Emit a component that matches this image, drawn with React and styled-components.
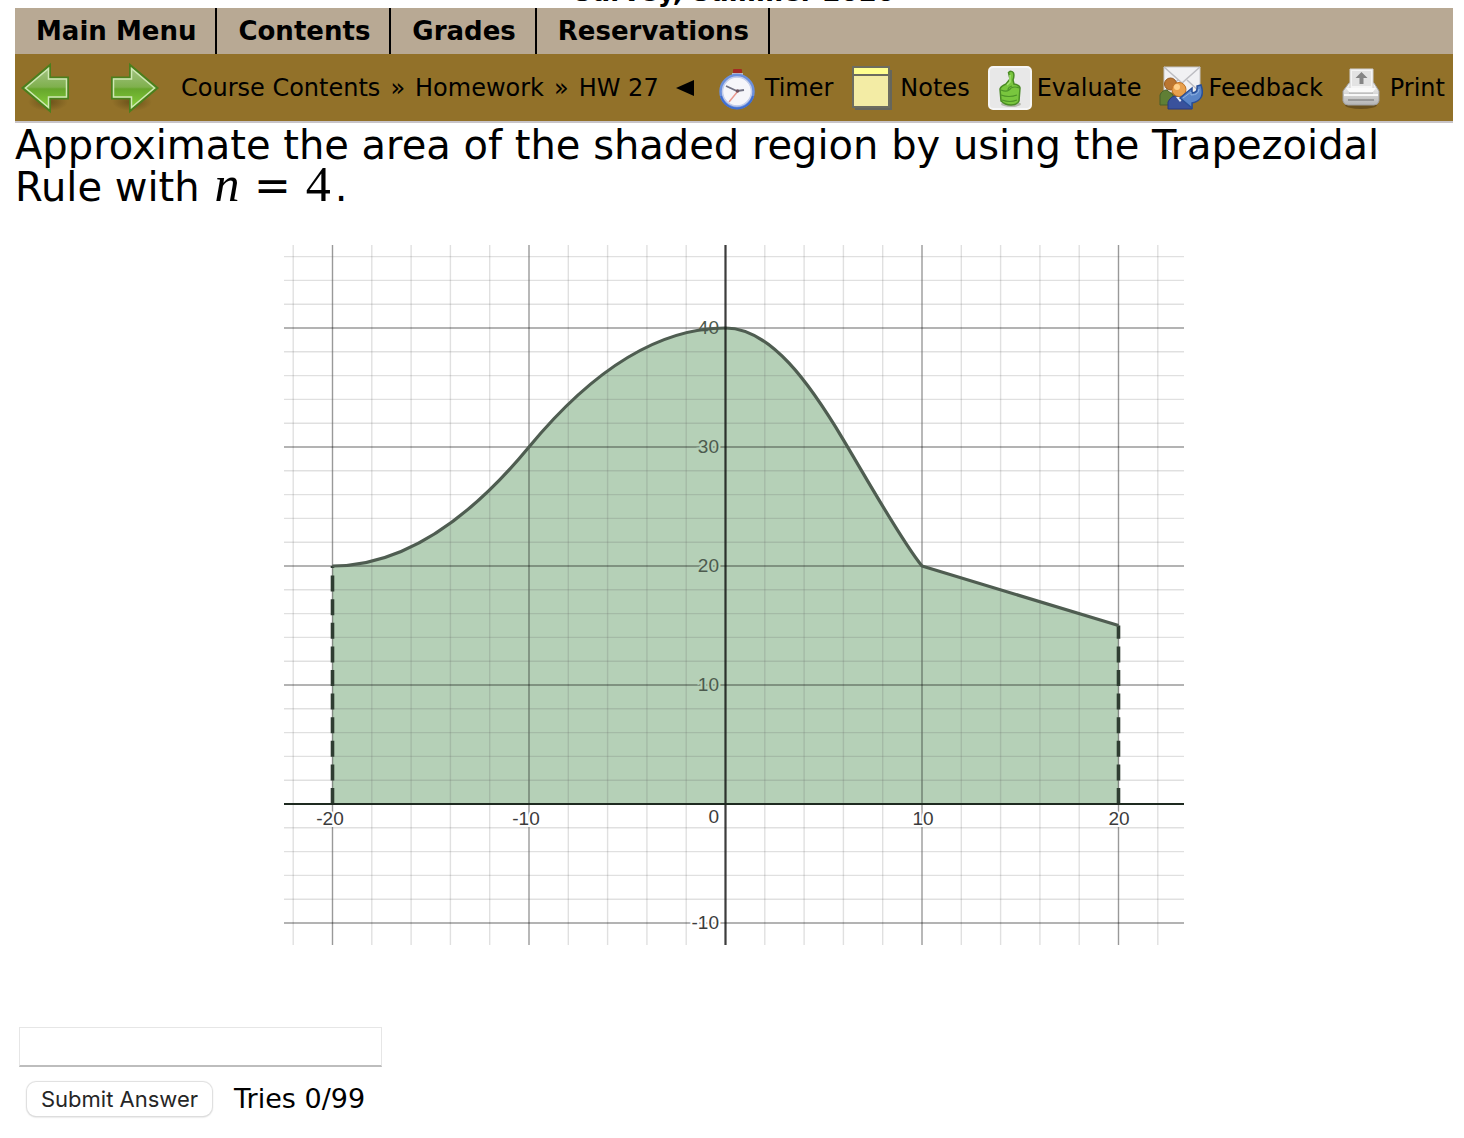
import styled, { createGlobalStyle } from 'styled-components';

const GlobalStyle = createGlobalStyle`
    body {
        margin: 0;
        background-color: #ffffff;
        color: #000000;
        font-family: Verdana, "DejaVu Sans", sans-serif;
    }
`;

const Page = styled.div`
    padding: 0px 11px 24px 15px;
`;

const CourseTitle = styled.div`
    box-sizing: border-box;
    height: 8px;
    padding-bottom: 2px;
    overflow: hidden;
    display: flex;
    justify-content: center;
    align-items: flex-end;
    font-size: 26px;
    font-weight: 700;
    line-height: 28px;
`;

const MainMenu = styled.nav`
    display: flex;
    background-color: #b8a994;
`;

const MenuLink = styled.a`
    padding: 0px 19px 0px 21px;
    border-right: 2px solid #000000;
    color: #000000;
    font-size: 26px;
    font-weight: 700;
    line-height: 46px;
    text-decoration: none;
`;

const Toolbar = styled.div`
    display: flex;
    align-items: center;
    justify-content: space-between;
    height: 67px;
    padding: 0px 8px 0px 5px;
    background-color: #927129;
    border-bottom: 2px solid #c8c4c8;
    font-size: 24px;
    white-space: nowrap;
`;

const Group = styled.div`
    display: flex;
    align-items: center;
    gap: ${(props) => props.$gap}px;
`;

const IconLink = styled.a`
    display: flex;
`;

const Crumbs = styled.div`
    display: flex;
    align-items: center;
    gap: 10px;
`;

const Crumb = styled.a`
    color: #000000;
    text-decoration: none;
`;

const Collapse = styled.button`
    display: flex;
    margin-left: 7px;
    padding: 0px;
    border: none;
    background: none;
    cursor: pointer;
`;

const Tool = styled.a`
    display: flex;
    align-items: center;
    gap: 5px;
    color: #000000;
    text-decoration: none;
`;

const Question = styled.p`
    margin: 1px 0px 0px 0px;
    font-size: 40px;
    line-height: 42px;
`;

const Variable = styled.i`
    margin-left: 2px;
    font-family: "Liberation Serif", serif;
    font-size: 50px;
    line-height: 1px;
`;

const Equals = styled.span`
    margin: 0px 2px;
    font-size: 44px;
    line-height: 1px;
`;

const Num = styled.span`
    margin-right: 4px;
    font-family: "Liberation Serif", serif;
    font-size: 50px;
    line-height: 1px;
`;

const Figure = styled.figure`
    display: flex;
    justify-content: center;
    margin: 37px 0px 82px 0px;
    svg {
        flex: 0 1 900px;
        min-width: 0;
    }
`;

const AnswerForm = styled.form`
    display: flex;
    flex-direction: column;
    align-items: flex-start;
    gap: 13px;
    padding-left: 4px;
`;

const AnswerInput = styled.input`
    box-sizing: border-box;
    width: 363px;
    max-width: 100%;
    height: 40px;
    padding: 0px 8px;
    border: 1px solid #e6e6e6;
    border-bottom: 2px solid #bdbdbd;
    font-size: 24px;
`;

const SubmitRow = styled.div`
    display: flex;
    align-items: center;
    gap: 22px;
    padding-left: 8px;
`;

const SubmitButton = styled.button`
    height: 34px;
    padding: 0px 14px;
    border: none;
    border-radius: 9px;
    background-color: #ffffff;
    box-shadow: 0px 0px 1px 1px #dedede, 0px 1px 2px #c4c4c4;
    color: #262626;
    font-family: Inter, sans-serif;
    font-size: 22px;
    line-height: 34px;
`;

const Tries = styled.span`
    font-size: 27px;
    line-height: 38px;
`;

const ArrowIcon = ({ flip }) => (
    <svg width="49" height="52" viewBox="0 0 49 52" aria-hidden="true">
        <defs>
            <linearGradient id="arrowFill" x1="0" y1="0" x2="0" y2="1">
                <stop offset="0" stopColor="#a9c68c" />
                <stop offset="0.48" stopColor="#7fb04d" />
                <stop offset="0.52" stopColor="#67a62c" />
                <stop offset="1" stopColor="#8ad63c" />
            </linearGradient>
            <radialGradient id="arrowShade">
                <stop offset="0" stopColor="#503c10" stopOpacity="0.6" />
                <stop offset="1" stopColor="#503c10" stopOpacity="0" />
            </radialGradient>
        </defs>
        <g transform={flip ? 'translate(49 0) scale(-1 1)' : undefined}>
            <ellipse cx="28" cy="40" rx="20" ry="9" fill="url(#arrowShade)" />
            <path d="M2.500 26 30 3v12.500h18v21H30v12.500z" fill="url(#arrowFill)" stroke="#4b7f1d" strokeWidth="2" />
            <path d="M5.500 26 28.500 6.500v10.500h18v18H28.500v10.500z" fill="none" stroke="#cfe8b4" strokeWidth="1.500" />
        </g>
    </svg>
);

const TimerIcon = () => (
    <svg width="44" height="44" viewBox="0 0 44 44" aria-hidden="true">
        <rect x="17" y="3" width="9" height="6" rx="1" fill="#a52a22" />
        <rect x="16" y="7" width="11" height="3" fill="#b9b9c4" />
        <circle cx="21" cy="25.500" r="16" fill="#f6f6fa" stroke="#6c90dc" strokeWidth="3.500" />
        <circle cx="21" cy="25.500" r="14.500" fill="none" stroke="#c3cdea" strokeWidth="1.500" />
        <path d="M5 30a16.500 16.500 0 0 0 32 0" fill="none" stroke="#416fd0" strokeWidth="2" />
        <path d="m10 20 11 5 7-1" fill="none" stroke="#737384" strokeWidth="1.800" />
        <path d="m22 25-9 11" stroke="#e9988e" strokeWidth="1.500" />
        <circle cx="21.500" cy="25" r="1.800" fill="#725560" />
    </svg>
);

const NotesIcon = () => (
    <svg width="44" height="44" viewBox="0 0 44 44" aria-hidden="true">
        <path d="M4 4h37v40H4z" fill="#66665c" />
        <path d="M2 1h36v40H2z" fill="#f3eca5" stroke="#6d6d60" strokeWidth="2" />
        <path d="M3 2h34v6H3z" fill="#ffff90" />
        <path d="M2 9h36" stroke="#6d6d60" strokeWidth="2" />
    </svg>
);

const EvaluateIcon = () => (
    <svg width="44" height="44" viewBox="0 0 44 44" aria-hidden="true">
        <rect x="1" y="1" width="42" height="42" rx="4" fill="#e8e8e8" stroke="#f6f6f6" strokeWidth="2" />
        <ellipse cx="23" cy="38" rx="10" ry="3" fill="#b4b8ae" />
        <path
            d="M20.500 6.500q3-2.500 5 .500 1 3-.500 7l1 4q6 1 6 4l-1 13q-2 4-8 4-6 0-10-4l-1-12q1-3 6-5l4-5z"
            fill="#79c63e"
            stroke="#4a8a25"
            strokeWidth="1.500"
        />
        <path d="M13 24q7 3 10-2 4-2 8 0M13 29q8 3 16 0M14 34q8 3 15 0M24 20q-4 1-4 4" fill="none" stroke="#4d9428" strokeWidth="1.200" />
        <path d="M22 9v7l-3 3" fill="none" stroke="#a5e374" strokeWidth="1.500" />
    </svg>
);

const FeedbackIcon = () => (
    <svg width="44" height="44" viewBox="0 0 44 44" aria-hidden="true">
        <path d="M5 1h36v25H5z" fill="#f1f1f3" stroke="#c5c5c8" />
        <path d="m5 1 18 16L41 1M5 26l14-12M41 26 28 14" fill="none" stroke="#bdbdc2" strokeWidth="1.500" />
        <path d="M1 39V29q2-5 7-5l6 5v10z" fill="#607f35" stroke="#46612a" />
        <circle cx="11.500" cy="18" r="6" fill="#ba7631" stroke="#96591e" />
        <path d="M9 43v-7q3-7 12-7 10 0 12 8v6z" fill="#3a529c" stroke="#29397e" />
        <path d="m17 31 4 5 4-5z" fill="#e9edf7" />
        <circle cx="20" cy="23.500" r="7" fill="#e8a04d" stroke="#bf7223" />
        <circle cx="18" cy="21" r="3" fill="#ffd08b" />
        <path d="m21 32 12-10v5q6 0 5-7l4-1q5 15-9 18v5z" fill="#5985c8" stroke="#284f98" strokeWidth="1.500" />
        <path d="m24 32 8-6v3q8 0 8-6" fill="none" stroke="#90b3e3" />
    </svg>
);

const PrintIcon = () => (
    <svg width="44" height="44" viewBox="0 0 44 44" aria-hidden="true">
        <defs>
            <linearGradient id="printBody" x1="0" y1="0" x2="0" y2="1">
                <stop offset="0" stopColor="#f7f7f7" />
                <stop offset="1" stopColor="#b4b4b4" />
            </linearGradient>
        </defs>
        <ellipse cx="20" cy="39" rx="16" ry="4" fill="#503c18" opacity="0.6" />
        <path d="m8 17-6 8v10q1 4 5 4h26q4 0 5-4V25l-5-8z" fill="url(#printBody)" stroke="#a0a0a0" />
        <path d="M9 3h23v21H9z" fill="#f5f5f5" stroke="#d0d0d0" />
        <path d="M11 5h19v15H11z" fill="#e3e3e3" />
        <path d="m20.500 6 6 6h-4v6h-4v-6h-4z" fill="#858585" />
        <path d="M5 22h30l-4 5H9z" fill="#fafafa" />
        <path d="M3 29h34" stroke="#f7f7f7" strokeWidth="2" />
        <path d="M7 34h26" stroke="#8a8a8a" strokeWidth="1.500" />
        <path d="M8 27h24" stroke="#a7a7a7" />
    </svg>
);

const TOOLS = [
    { label: 'Timer', Icon: TimerIcon },
    { label: 'Notes', Icon: NotesIcon },
    { label: 'Evaluate', Icon: EvaluateIcon },
    { label: 'Feedback', Icon: FeedbackIcon },
    { label: 'Print', Icon: PrintIcon },
];

const MENU = ['Main Menu', 'Contents', 'Grades', 'Reservations'];

// graph units -> svg units
const gx = (x) => 441.5 + x * 19.65;
const gy = (y) => 559 - y * 11.9;
const pt = (x, y) => `${gx(x)} ${gy(y)}`;

const CURVE = [
    `M${pt(-20, 20)}`,
    `Q${pt(-15, 20)} ${pt(-10, 30)}`,
    `Q${pt(-5, 40)} ${pt(0, 40)}`,
    `C${pt(2.3, 40)} ${pt(4.3, 35.3)} ${pt(6, 30.6)}`,
    `C${pt(7.3, 27)} ${pt(9, 22)} ${pt(10, 20)}`,
    `L${pt(20, 15)}`,
].join(' ');

const evens = (from, to) => Array.from({ length: (to - from) / 2 + 1 }, (_, i) => from + i * 2);
const gridStroke = (v) => (v % 10 === 0 ? '#000000' : '#666666');
const gridOpacity = (v) => (v % 10 === 0 ? 0.4 : 0.2);

const GraphText = styled.text`
    font-family: "Liberation Sans", Arial, sans-serif;
    font-size: 19px;
    fill: ${(props) => (props.$soft ? '#4c5a4e' : '#3c3c3c')};
    stroke: ${(props) => props.$halo || 'none'};
    stroke-width: 4px;
    paint-order: stroke;
`;

function Graph() {
    return (
        <svg viewBox="0 0 900 700" role="img" aria-label="Shaded region under a curve from -20 to 20">
            <path d={`${CURVE} L${pt(20, 0)} L${pt(-20, 0)} Z`} fill="#b5d0b7" />
            {evens(-22, 22).map((x) => (
                <path key={`x${x}`} d={`M${gx(x)} 0V700`} stroke={gridStroke(x)} strokeOpacity={gridOpacity(x)} strokeWidth="1.4" />
            ))}
            {evens(-10, 46).map((y) => (
                <path key={`y${y}`} d={`M0 ${gy(y)}H900`} stroke={gridStroke(y)} strokeOpacity={gridOpacity(y)} strokeWidth="1.4" />
            ))}
            <path
                d={`M${pt(-20, 0)}L${pt(-20, 20)}M${pt(20, 0)}L${pt(20, 15)}`}
                stroke="#2f3d32"
                strokeWidth="3.6"
                strokeDasharray="16 7.6"
            />
            <path d={CURVE} fill="none" stroke="#4f5d51" strokeWidth="3.2" strokeLinejoin="round" />
            {[10, 20, 30].map((y) => (
                <GraphText key={y} $soft $halo="#b5d0b7" x="435" y={gy(y) + 6} textAnchor="end">{y}</GraphText>
            ))}
            <GraphText $soft x="435" y={gy(40) + 6} textAnchor="end">40</GraphText>
            <GraphText $halo="#ffffff" x="435" y={gy(-10) + 6} textAnchor="end">-10</GraphText>
            <GraphText $halo="#ffffff" x="435" y="578" textAnchor="end">0</GraphText>
            <GraphText $halo="#ffffff" x="46" y="580" textAnchor="middle">-20</GraphText>
            <GraphText $halo="#ffffff" x="242" y="580" textAnchor="middle">-10</GraphText>
            <GraphText $halo="#ffffff" x="639" y="580" textAnchor="middle">10</GraphText>
            <GraphText $halo="#ffffff" x="835" y="580" textAnchor="middle">20</GraphText>
            <path d="M441.500 0V700" stroke="#000000" strokeOpacity="0.6" strokeWidth="2.4" />
            <path d="M0 559H900" stroke="#1e2a20" strokeWidth="2.2" />
        </svg>
    );
}

function App() {
    return (
        <Page>
            <GlobalStyle />
            <CourseTitle>Survey, Summer 2020</CourseTitle>
            <MainMenu>
                {MENU.map((item) => (
                    <MenuLink key={item} href="#">{item}</MenuLink>
                ))}
            </MainMenu>
            <Toolbar>
                <Group $gap={21}>
                    <Group $gap={42}>
                        <IconLink href="#" aria-label="Previous"><ArrowIcon /></IconLink>
                        <IconLink href="#" aria-label="Next"><ArrowIcon flip /></IconLink>
                    </Group>
                    <Crumbs>
                        <Crumb href="#">Course Contents</Crumb>
                        <span>»</span>
                        <Crumb href="#">Homework</Crumb>
                        <span>»</span>
                        <Crumb href="#">HW 27</Crumb>
                        <Collapse type="button" aria-label="Collapse">
                            <svg width="18" height="18" viewBox="0 0 18 18">
                                <path d="M0 9 18 1v16z" />
                            </svg>
                        </Collapse>
                    </Crumbs>
                </Group>
                <Group $gap={18}>
                    {TOOLS.map(({ label, Icon }) => (
                        <Tool key={label} href="#">
                            <Icon />
                            {label}
                        </Tool>
                    ))}
                </Group>
            </Toolbar>
            <Question>
                Approximate the area of the shaded region by using the Trapezoidal Rule with{' '}
                <Variable>n</Variable> <Equals>=</Equals> <Num>4</Num>.
            </Question>
            <Figure>
                <Graph />
            </Figure>
            <AnswerForm onSubmit={(e) => e.preventDefault()}>
                <AnswerInput type="text" aria-label="Answer" />
                <SubmitRow>
                    <SubmitButton type="submit">Submit Answer</SubmitButton>
                    <Tries>Tries 0/99</Tries>
                </SubmitRow>
            </AnswerForm>
        </Page>
    );
}

export default App;
